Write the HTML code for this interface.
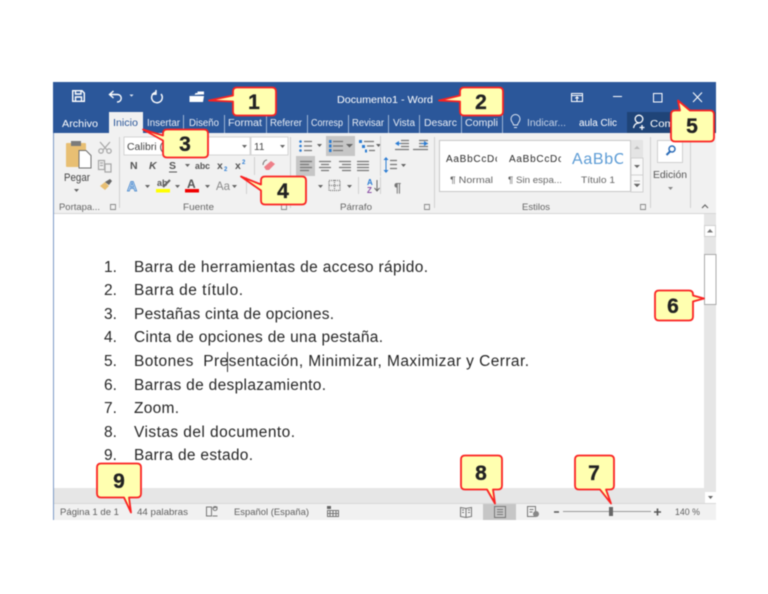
<!DOCTYPE html>
<html lang="es"><head><meta charset="utf-8"><title>Documento1 - Word</title>
<style>
html,body{margin:0;padding:0;background:#fff;width:768px;height:594px;overflow:hidden}
body>svg{display:block;filter:blur(.5px)}
text{font-family:"Liberation Sans",sans-serif;white-space:pre}
.w{fill:#fff;font-size:10px}
.tab{fill:#e8edf5;font-size:10px}
.d{fill:#262626;font-size:15.5px}
.g{fill:#666;font-size:9px}
.s{fill:#5f5f5f;font-size:9px}
.c{fill:#222;stroke:#222;stroke-width:.3;font-size:21px;font-weight:bold;text-anchor:middle}
.co{fill:#ffffb0;stroke:#fa2222;stroke-width:1.8;stroke-linejoin:round}
.sep{stroke:#d0d0d0;stroke-width:1}
.tsep{stroke:#9db3d4;stroke-width:1}
.ar{fill:#666}
</style></head><body>
<svg width="768" height="594" viewBox="0 0 768 594" xmlns="http://www.w3.org/2000/svg">
<rect width="768" height="594" fill="#fff"/>
<rect x="53" y="82" width="663" height="51" fill="#2b579a"/>
<rect x="53" y="133" width="663" height="80" fill="#f1f1f1"/>
<rect x="53" y="213" width="663" height="1" fill="#d6d6d6"/>
<rect x="53" y="214" width="663" height="274" fill="#fff"/>
<rect x="53" y="488" width="663" height="15" fill="#e6e6e6"/>
<rect x="53" y="503" width="663" height="17" fill="#f1f1f1"/>
<rect x="53" y="503" width="663" height="1" fill="#d8d8d8"/>
<rect x="53" y="133" width="1" height="387" fill="#7c9ac6"/>

<!-- QAT -->
<g fill="none" stroke="#fff" stroke-width="1.4">
<path d="M72.700 90.700h9.300l2.300 2.300v8.300h-11.600z"/><path d="M75.500 90.700v3.300h5.500v-3.300M75.500 101.300v-4.300h6v4.300"/>
<path d="M113.500 91l-4 3.500 4 3.500M110 94.500h7.500c5 0 5 7.500-.5 7.500"/>
<path d="M160 93.500a5.300 5.300 0 1 1-5-1.800M155 89.500v4.200h-4.200" transform="translate(1 .5)"/>
</g>
<path d="M129.500 94.500h4l-2 2.200z" fill="#dfe7f3"/>
<path d="M189.500 95h5l1-2h2v-1.500h6.500v3h-1.500zM189.500 96h14.500l-1 6h-13.500z" fill="#fff"/>
<text x="337" y="103" class="w" textLength="96" lengthAdjust="spacingAndGlyphs">Documento1 - Word</text>

<!-- window controls -->
<g fill="none" stroke="#fff" stroke-width="1">
<rect x="571.500" y="93.500" width="11" height="8"/><path d="M571 95.500h12M577 101v-4M575.300 98.500l1.700-1.700 1.700 1.700"/>
<path d="M613 96.500h9"/><rect x="653.500" y="93.500" width="8.500" height="8.500"/><path d="M693 92.500l9 9.500M702 92.500l-9 9.500"/>
</g>

<!-- tabs -->
<rect x="627" y="112" width="89" height="21" fill="#1f4478"/>
<rect x="109" y="112" width="34" height="22" fill="#f1f1f1"/>
<text x="62" y="127" class="w" textLength="36" lengthAdjust="spacingAndGlyphs">Archivo</text>
<text x="113" y="126" class="tab" style="fill:#2b579a" textLength="25" lengthAdjust="spacingAndGlyphs">Inicio</text>
<text x="147" y="126" class="tab" textLength="33" lengthAdjust="spacingAndGlyphs">Insertar</text>
<text x="189" y="126" class="tab" textLength="30" lengthAdjust="spacingAndGlyphs">Diseño</text>
<text x="228" y="126" class="tab" textLength="34" lengthAdjust="spacingAndGlyphs">Format</text>
<text x="270" y="126" class="tab" textLength="32" lengthAdjust="spacingAndGlyphs">Referer</text>
<text x="311" y="126" class="tab" textLength="32" lengthAdjust="spacingAndGlyphs">Corresp</text>
<text x="352" y="126" class="tab" textLength="32" lengthAdjust="spacingAndGlyphs">Revisar</text>
<text x="393" y="126" class="tab" textLength="22" lengthAdjust="spacingAndGlyphs">Vista</text>
<text x="424" y="126" class="tab" textLength="33" lengthAdjust="spacingAndGlyphs">Desarc</text>
<text x="465" y="126" class="tab" textLength="33" lengthAdjust="spacingAndGlyphs">Compli</text>
<path class="tsep" d="M183.500 115v18M224.500 115v18M266.500 115v18M307.500 115v18M348.500 115v18M388.500 115v18M419.500 115v18M461.500 115v18M502.500 115v18"/>
<g fill="none" stroke="#dfe7f3" stroke-width="1">
<path d="M513.500 125c0-2-2.500-3-2.500-6a4.500 4.500 0 0 1 9 0c0 3-2.500 4-2.500 6zM514 127.500h3"/></g>
<text x="527" y="126" class="tab" style="fill:#c5d2e6" textLength="39" lengthAdjust="spacingAndGlyphs">Indicar...</text>
<text x="579" y="126" class="w" textLength="38" lengthAdjust="spacingAndGlyphs">aula Clic</text>
<g fill="none" stroke="#fff" stroke-width="1.300"><circle cx="639" cy="119" r="3.800"/><path d="M633.500 128c.5-3 2.500-5 5.500-5M642 125v5M639.500 127.500h5"/></g>
<text x="650" y="127" class="w" textLength="24" lengthAdjust="spacingAndGlyphs">Com</text>

<!-- group separators -->
<path class="sep" d="M119.500 137v71M290.500 137v71M434.500 137v71M650.500 137v71M690.500 137v71"/>

<!-- clipboard -->
<rect x="66" y="143" width="20" height="24" rx="1" fill="#e8bf73"/>
<rect x="71" y="141" width="10" height="5" fill="#7b7b7b"/>
<path d="M79 150.500h7l5 5v12.500h-12z" fill="#fff" stroke="#6f6f6f"/>
<text x="64" y="181" fill="#444" font-size="11" textLength="26" lengthAdjust="spacingAndGlyphs">Pegar</text>
<path d="M74 189h5l-2.500 3z" class="ar"/>
<g fill="none" stroke="#a6a6a6" stroke-width="1.200"><path d="M100 142l7 8M110 142l-7 8"/><circle cx="101" cy="151" r="2.200"/><circle cx="109" cy="151" r="2.200"/>
<path d="M98.500 160.500h6v9h-6zM105 164h6v8h-6zM100 163h3M100 165.500h3"/></g>
<path d="M100 186l5-4 4 4-4 4z" fill="#e8bf73"/><path d="M105 182l5-3 2 2-3 4z" fill="#666"/>

<!-- font boxes -->
<rect x="124" y="137" width="126" height="18" fill="#fff" stroke="#d4d4d4"/>
<rect x="251" y="137" width="37" height="18" fill="#fff" stroke="#d4d4d4"/>
<text x="127" y="150" fill="#444" font-size="10" textLength="36" lengthAdjust="spacingAndGlyphs">Calibri (</text>
<text x="254" y="150" fill="#444" font-size="10">11</text>
<path d="M242 145h5l-2.500 3zM280 145h5l-2.500 3z" class="ar"/>

<!-- font row 2 -->
<g font-weight="bold" font-size="10.500" fill="#555">
<text x="130" y="169">N</text><text x="149" y="169" font-style="italic">K</text><text x="169" y="169">S</text>
<text x="195" y="169" font-size="9.500" textLength="15" lengthAdjust="spacingAndGlyphs">abc</text><text x="217" y="169">x</text><text x="235" y="169">x</text></g>
<path d="M169 172h8" stroke="#555"/>
<text x="224" y="171" font-size="6" fill="#2b7cd3" font-weight="bold">2</text>
<text x="242" y="164" font-size="6" fill="#2b7cd3" font-weight="bold">2</text>
<path d="M185 164h5l-2.500 3z" class="ar"/>
<path d="M254.500 157v18" class="sep"/>
<path d="M264 167l7-6 4 3-6 6h-3z" fill="#ee7f88"/><path d="M263 165c0-3 2-5 4-5" stroke="#777" fill="none"/>

<!-- font row 3 -->
<text x="127" y="191" font-size="14" font-weight="bold" fill="#c4d9f0" stroke="#3a7fc9" stroke-width=".7">A</text>
<text x="157" y="186" font-size="9" font-weight="bold" fill="#555">ab</text><path d="M163 187l7-7" stroke="#666" stroke-width="2"/>
<rect x="156" y="189" width="14" height="3.500" fill="#ffff00"/>
<text x="187" y="188" font-size="12" fill="#555" font-weight="bold">A</text>
<rect x="185" y="189" width="14" height="3.500" fill="#f00000"/>
<text x="216" y="190" font-size="12" fill="#8a8a8a" textLength="14" lengthAdjust="spacingAndGlyphs">Aa</text>
<path d="M145 185h5l-2.500 3zM175 185h5l-2.500 3zM205 185h5l-2.500 3zM232 185h5l-2.500 3z" class="ar"/>
<path d="M246.500 177v17" class="sep"/>

<!-- paragraph -->
<rect x="326" y="136" width="29" height="20" fill="#c6c6c6"/>
<rect x="296" y="156" width="19" height="20" fill="#c6c6c6"/>
<g stroke="#777" stroke-width="1.200" fill="none">
<path d="M304 141.500h8M304 146h8M304 150.500h8"/>
<path d="M333 141.500h10M333 146h10M333 150.500h10"/>
<path d="M364 141.500h10M367 146h7M369 150.500h6"/>
<path d="M300 161.500h12M300 164.500h9M300 167.500h12M300 170.500h9"/>
<path d="M319 161.500h12M321 164.500h8M319 167.500h12M321 170.500h8"/>
<path d="M339 161.500h12M342 164.500h9M339 167.500h12M342 170.500h9"/>
<path d="M357 161.500h12M357 164.500h12M357 167.500h12M357 170.500h12"/>
<path d="M390 160.500h7M390 164.500h7M390 168.500h7"/>
<path d="M401 140.500h8M401 143.500h8M401 146.500h8M395 149.500h14"/>
<path d="M419 140.500h9M419 143.500h9M419 146.500h9M413 149.500h15"/>
<path d="M329 180.500h11v10h-11zM334.500 180v11M329 185.500h11" stroke-dasharray="1 1"/>
</g>
<g fill="#2b7cd3"><circle cx="300.500" cy="141.500" r="1.300"/><circle cx="300.500" cy="146" r="1.300"/><circle cx="300.500" cy="150.500" r="1.300"/>
<rect x="329" y="140" width="2.500" height="3"/><rect x="329" y="144.500" width="2.500" height="3"/><rect x="329" y="149" width="2.500" height="3"/>
<rect x="359" y="140" width="3" height="3"/><rect x="362" y="145" width="3" height="3"/><rect x="365" y="149.500" width="2" height="3"/>
<path d="M395 143.500l4-2.500v5zM428 143.500l-4-2.500v5zM383.500 160l2.500-3 2.500 3zM383.500 170l2.500 3 2.500-3z"/><rect x="385.500" y="160" width="1" height="10"/>
<path d="M398 143h3v1h-3zM421 143h3v1h-3z"/></g>
<path d="M317 144h5l-2.500 3zM346 144h7l-3.500 3.500zM376 144h5l-2.500 3zM401 164h5l-2.500 3zM318 185h5l-2.500 3zM347 185h5l-2.500 3z" class="ar"/>
<path d="M358.500 177v17M380.500 136v40M380.500 177v17" class="sep"/>
<text x="367" y="185" font-size="8" font-weight="bold" fill="#2b7cd3">A</text>
<text x="367" y="193" font-size="8" font-weight="bold" fill="#8a4fa5">Z</text>
<path d="M377 180v11M374.500 188l2.500 3 2.500-3" stroke="#666" fill="none"/>
<text x="394" y="192" font-size="13" fill="#777" font-weight="bold">¶</text>

<!-- styles -->
<rect x="439.500" y="140.500" width="191" height="51" fill="#fff" stroke="#c8c8c8"/>
<rect x="631" y="140" width="12" height="18" fill="#e4e4e4"/>
<rect x="631" y="158" width="12" height="17" fill="#f8f8f8" stroke="#d0d0d0"/>
<rect x="631" y="175" width="12" height="17" fill="#f8f8f8" stroke="#d0d0d0"/>
<path d="M634 149l3-3 3 3z" fill="#bbb"/><path d="M634 165h6l-3 3z" class="ar"/><path d="M634 181h6M634 184h6l-3 3z" fill="#666" stroke="#777" stroke-width=".5"/>
<svg x="440" y="146" width="57" height="24"><text x="6" y="16" fill="#2a2a2a" font-size="10" textLength="54" lengthAdjust="spacing">AaBbCcDc</text></svg>
<svg x="503" y="146" width="58" height="24"><text x="6" y="16" fill="#2a2a2a" font-size="10" textLength="54" lengthAdjust="spacing">AaBbCcDc</text></svg>
<svg x="566" y="146" width="57" height="24"><text x="6" y="18" fill="#5b9bd5" font-size="16" textLength="62" lengthAdjust="spacing">AaBbCc</text></svg>
<text x="450" y="183" class="g" textLength="43" lengthAdjust="spacingAndGlyphs">¶ Normal</text>
<text x="508" y="183" class="g" textLength="54" lengthAdjust="spacingAndGlyphs">¶ Sin espa...</text>
<text x="581" y="183" class="g" textLength="34" lengthAdjust="spacingAndGlyphs">Título 1</text>

<!-- edit -->
<rect x="657.500" y="140.500" width="25" height="22" fill="#fff" stroke="#d0d0d0"/>
<circle cx="672" cy="149" r="3" fill="none" stroke="#2b6cb8" stroke-width="1.500"/><path d="M670 151.500l-3.500 3.500" stroke="#2b6cb8" stroke-width="2"/>
<text x="653" y="178" fill="#555" font-size="10" textLength="34" lengthAdjust="spacingAndGlyphs">Edición</text>
<path d="M668 187h5l-2.500 3z" fill="#888"/>

<!-- group labels -->
<text x="59" y="210" class="g" textLength="41" lengthAdjust="spacingAndGlyphs">Portapa...</text>
<text x="183" y="210" class="g" textLength="31" lengthAdjust="spacingAndGlyphs">Fuente</text>
<text x="340" y="210" class="g" textLength="32" lengthAdjust="spacingAndGlyphs">Párrafo</text>
<text x="522" y="210" class="g" textLength="28" lengthAdjust="spacingAndGlyphs">Estilos</text>
<g fill="none" stroke="#888" stroke-width=".9"><path d="M110.500 204.500h5v5h-5zM281.500 204.500h5v5h-5zM424.500 204.500h5v5h-5zM640.500 204.500h5v5h-5z"/></g>
<path d="M702 208l3-3 3 3" fill="none" stroke="#666" stroke-width="1.200"/>

<!-- document -->
<text x="104" y="272" class="d">1.</text>
<text x="104" y="295" class="d">2.</text>
<text x="104" y="319" class="d">3.</text>
<text x="104" y="342" class="d">4.</text>
<text x="104" y="366" class="d">5.</text>
<text x="104" y="390" class="d">6.</text>
<text x="104" y="413" class="d">7.</text>
<text x="104" y="437" class="d">8.</text>
<text x="104" y="460" class="d">9.</text>
<text x="134" y="272" class="d" textLength="294" lengthAdjust="spacing">Barra de herramientas de acceso rápido.</text>
<text x="134" y="295" class="d" textLength="109" lengthAdjust="spacing">Barra de título.</text>
<text x="134" y="319" class="d" textLength="200" lengthAdjust="spacing">Pestañas cinta de opciones.</text>
<text x="134" y="342" class="d" textLength="249" lengthAdjust="spacing">Cinta de opciones de una pestaña.</text>
<text x="134" y="366" class="d" textLength="395" lengthAdjust="spacing">Botones  Presentación, Minimizar, Maximizar y Cerrar.</text>
<text x="134" y="390" class="d" textLength="192" lengthAdjust="spacing">Barras de desplazamiento.</text>
<text x="134" y="413" class="d" textLength="45" lengthAdjust="spacing">Zoom.</text>
<text x="134" y="437" class="d" textLength="161" lengthAdjust="spacing">Vistas del documento.</text>
<text x="134" y="460" class="d" textLength="119" lengthAdjust="spacing">Barra de estado.</text>
<rect x="227" y="352" width="1" height="20" fill="#333"/>

<!-- scrollbar -->
<rect x="704" y="214" width="12" height="274" fill="#e6e6e6"/>
<rect x="704.500" y="225.500" width="11" height="11" fill="#fff" stroke="#d0d0d0"/>
<path d="M707 232.500l3-3.500 3 3.500z" fill="#777"/>
<rect x="704.500" y="254.500" width="11.500" height="50" fill="#fff" stroke="#aaa"/>
<rect x="705" y="492" width="11" height="11" fill="#fff"/>
<path d="M708 496h5l-2.500 3z" fill="#666"/>

<!-- status -->
<text x="60" y="515" class="s" textLength="59" lengthAdjust="spacingAndGlyphs">Página 1 de 1</text>
<text x="137" y="515" class="s" textLength="51" lengthAdjust="spacingAndGlyphs">44 palabras</text>
<text x="234" y="515" class="s" textLength="75" lengthAdjust="spacingAndGlyphs">Español (España)</text>
<text x="675" y="515" class="s" textLength="25" lengthAdjust="spacingAndGlyphs">140 %</text>
<rect x="483" y="504" width="33" height="16" fill="#c6c6c6"/>
<g fill="none" stroke="#777" stroke-width="1">
<path d="M206.500 507h5v9h-5zM212.500 508l5-1M212.500 516h5M215 510.500a2 2 0 1 1 .1 0"/>
<path d="M327.500 510.500h11v6h-11zM330 510.500v6M333 510.500v6M336 510.500v6M327.500 513.500h11"/>
<path d="M460.500 507.500l5.500 1 5.500-1v9l-5.500 1-5.500-1zM466 508v9M462 510h2M462 512.500h2M468 510h2M468 512.500h2"/>
<path d="M494.500 506.500h11v11h-11zM497 509.500h6M497 512h6M497 514.500h6"/>
<path d="M527.500 506.500h8v10h-8zM529.500 509.500h4M529.500 512h3"/>
</g>
<circle cx="536" cy="514" r="3" fill="#888"/>
<rect x="327" y="506" width="4" height="3" fill="#666"/>
<path d="M554 512h5M654 512h7M657.500 508.500v7" stroke="#555" stroke-width="1.600"/>
<path d="M563 511.500h88" stroke="#999"/>
<rect x="609" y="507" width="4" height="9" fill="#666"/>

<!-- callouts -->
<path class="co" d="M237 87.500h35q4 0 4 4v20q0 4-4 4h-35q-4 0-4-4v-10l-24-1 24-5v-4q0-4 4-4z"/>
<text x="254" y="109" class="c">1</text>
<path class="co" d="M464 87.500h35q4 0 4 4v20q0 4-4 4h-35q-4 0-4-4v-10l-21-1 21-5v-4q0-4 4-4z"/>
<text x="481" y="109" class="c">2</text>
<path class="co" d="M167 129.500h37q4 0 4 4v20q0 4-4 4h-37q-4 0-4-4v-13l-20-11 20 6v-2q0-4 4-4z"/>
<text x="185" y="151" class="c">3</text>
<path class="co" d="M265 176.500h37q4 0 4 4v20q0 4-4 4h-37q-4 0-4-4v-10l-20-14 20 8v-4q0-4 4-4z"/>
<text x="283" y="198" class="c">4</text>
<path class="co" d="M675 110.500h5l-2-10 12 10h20q4 0 4 4v23q0 4-4 4h-35q-4 0-4-4v-23q0-4 4-4z"/>
<text x="692" y="133" class="c">5</text>
<path class="co" d="M659 290.500h30q4 0 4 4v1l11 3-11 3v15q0 4-4 4h-30q-4 0-4-4v-22q0-4 4-4z"/>
<text x="673" y="313" class="c">6</text>
<path class="co" d="M579 455.500h31q4 0 4 4v26q0 4-4 4h-4l5 14-11-14h-21q-4 0-4-4v-26q0-4 4-4z"/>
<text x="594" y="480" class="c">7</text>
<path class="co" d="M465 455.500h33q4 0 4 4v26q0 4-4 4h-5l2 14-8-14h-22q-4 0-4-4v-26q0-4 4-4z"/>
<text x="481" y="480" class="c">8</text>
<path class="co" d="M101 463.500h36q4 0 4 4v26q0 4-4 4h-8l2 15-7-15h-23q-4 0-4-4v-26q0-4 4-4z"/>
<text x="119" y="488" class="c">9</text>
</svg>
</body></html>
